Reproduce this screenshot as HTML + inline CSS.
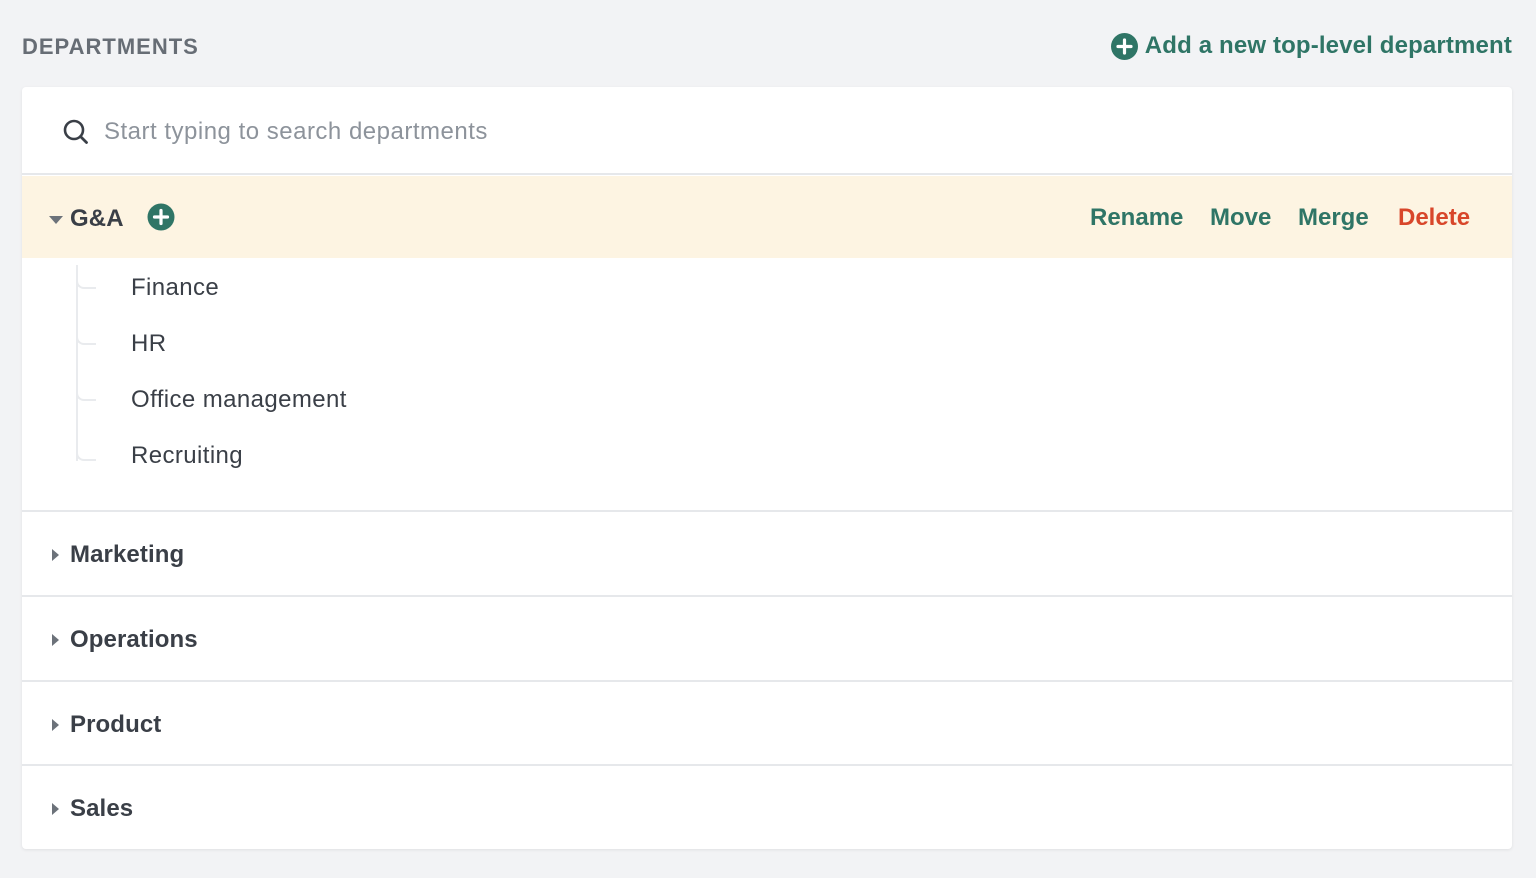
<!DOCTYPE html>
<html><head><style>
*{margin:0;padding:0;box-sizing:border-box}
body{width:1536px;height:878px;background:#f2f3f5;font-family:"Liberation Sans",sans-serif;position:relative;overflow:hidden;color:#3a3f47}
.abs{position:absolute}
.h{left:22px;top:34px;font-size:22px;font-weight:bold;color:#676d75;letter-spacing:1px}
.add{right:24px;top:32px;font-size:24px;font-weight:bold;color:#2f7566;display:flex;align-items:center;gap:7px;letter-spacing:0.15px}
.card{left:22px;top:87px;width:1490px;height:762px;background:#fff;border-radius:4px;box-shadow:0 1px 3px rgba(0,0,0,.08)}
.search{position:absolute;left:0;top:0;width:100%;height:88px;border-bottom:2px solid #e6e8eb}
.search span{position:absolute;left:82px;top:31px;font-size:24px;color:#8d939b;letter-spacing:0.5px}
.sel{position:absolute;left:0;top:89px;width:100%;height:82px;background:#fdf4e2}
.row{position:absolute;left:0;width:100%;height:85px;border-top:2px solid #e6e8eb}
.lbl{position:absolute;left:48px;font-size:24px;font-weight:bold;color:#3a3f47;letter-spacing:0.1px}
.tri{position:absolute;width:0;height:0}
.r{border-top:6px solid transparent;border-bottom:6px solid transparent;border-left:7px solid #6c727a;left:30px}
.child{position:absolute;left:109px;font-size:24px;color:#3a3f47;letter-spacing:0.4px}
.act{position:absolute;top:28px;font-size:24px;font-weight:bold;color:#2f7566}
</style></head><body>
<div class="abs h">DEPARTMENTS</div>
<div class="abs add"><svg width="27" height="27" viewBox="0 0 27 27"><circle cx="13.5" cy="13.5" r="13.5" fill="#2f7566"/><path d="M13.5 7v13M7 13.5h13" stroke="#fff" stroke-width="3.2" stroke-linecap="round"/></svg>Add a new top-level department</div>
<div class="abs card">
 <div class="search"><svg style="position:absolute;left:40px;top:31px" width="28" height="28" viewBox="0 0 28 28"><circle cx="12" cy="12" r="9" fill="none" stroke="#3a3f47" stroke-width="2.6"/><path d="M18.5 18.5l6 6" stroke="#3a3f47" stroke-width="2.8" stroke-linecap="round"/></svg><span>Start typing to search departments</span></div>
 <div class="sel">
  <div class="tri" style="left:27px;top:40px;border-left:7px solid transparent;border-right:7px solid transparent;border-top:8px solid #6c727a"></div>
  <div class="lbl" style="top:29px">G&amp;A</div>
  <svg style="position:absolute;left:125px;top:27px" width="28" height="28" viewBox="0 0 28 28"><circle cx="14" cy="14" r="13.5" fill="#2f7566"/><path d="M14 7.5v13M7.5 14h13" stroke="#fff" stroke-width="3.2" stroke-linecap="round"/></svg>
  <div class="act" style="left:1068px">Rename</div>
  <div class="act" style="left:1188px">Move</div>
  <div class="act" style="left:1276px">Merge</div>
  <div class="act" style="left:1376px;color:#d8462a">Delete</div>
 </div>
 <div style="position:absolute;left:54px;top:178px;width:20px;height:196px;border-left:2px solid #e9ebee"></div>
 <div style="position:absolute;left:54px;top:194px;width:20px;height:8px;border-left:2px solid #e9ebee;border-bottom:2px solid #e9ebee;border-bottom-left-radius:8px"></div>
 <div style="position:absolute;left:54px;top:250px;width:20px;height:8px;border-left:2px solid #e9ebee;border-bottom:2px solid #e9ebee;border-bottom-left-radius:8px"></div>
 <div style="position:absolute;left:54px;top:306px;width:20px;height:8px;border-left:2px solid #e9ebee;border-bottom:2px solid #e9ebee;border-bottom-left-radius:8px"></div>
 <div style="position:absolute;left:54px;top:362px;width:20px;height:12px;border-left:2px solid #e9ebee;border-bottom:2px solid #e9ebee;border-bottom-left-radius:8px"></div>
 <div class="child" style="top:187px">Finance</div>
 <div class="child" style="top:243px">HR</div>
 <div class="child" style="top:299px">Office management</div>
 <div class="child" style="top:355px">Recruiting</div>
 <div class="row" style="top:423px"><div class="tri r" style="top:37px"></div><div class="lbl" style="top:29px">Marketing</div></div>
 <div class="row" style="top:508px"><div class="tri r" style="top:37px"></div><div class="lbl" style="top:29px">Operations</div></div>
 <div class="row" style="top:593px"><div class="tri r" style="top:37px"></div><div class="lbl" style="top:29px">Product</div></div>
 <div class="row" style="top:677px"><div class="tri r" style="top:37px"></div><div class="lbl" style="top:29px">Sales</div></div>
</div>
</body></html>
